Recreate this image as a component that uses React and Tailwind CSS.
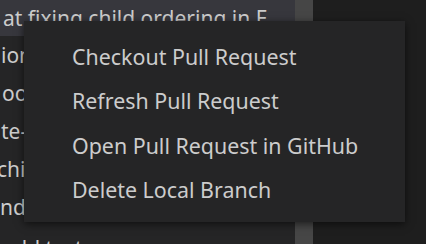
export default function App() {
  const rows = [
    { t: "at fixing child ordering in E", hl: true, pl: "pl-[3px]", h: "h-[36px]" },
    { t: "ion", pl: "pl-[1px]", h: "h-[38px]" },
    { t: "oo", pl: "pl-[2px]", h: "h-[38px]" },
    { t: "te-", pl: "pl-[1px]", h: "h-[38px]" },
    { t: "chi", pl: "ml-[-3px]", h: "h-[38px]" },
    { t: "nd", pl: "pl-0", h: "h-[38px]" },
    { t: "ald tests", pl: "pl-[10px]", h: "h-[38px] pt-[6px]" },
  ];
  const items = [
    "Checkout Pull Request",
    "Refresh Pull Request",
    "Open Pull Request in GitHub",
    "Delete Local Branch",
  ];
  return (
    <div
      className="relative w-[426px] h-[244px] overflow-hidden flex bg-[#1e1e1e] text-[#cccccc]"
      style={{ fontFamily: '"Noto Sans", "Open Sans", sans-serif' }}
    >
      <div className="relative w-[313px] h-full bg-[#252526] overflow-hidden flex flex-col">
        {rows.map((r, i) => (
          <div
            key={i}
            className={`${r.h} shrink-0 flex items-center w-[295px] overflow-hidden whitespace-nowrap text-[21px] ${
              r.hl ? "bg-[#37373d]" : ""
            }`}
          >
            <span className={`${r.pl} leading-none`}>{r.t}</span>
          </div>
        ))}
        <div className="absolute right-0 top-0 w-[18px] h-full bg-[rgba(121,121,121,0.4)]" />
      </div>
      <div className="absolute left-[24px] top-[21px] w-[381px] h-[201px] bg-[#252526] shadow-[0_2px_8px_rgba(0,0,0,0.6)] pt-[14px] flex flex-col">
        {items.map((it) => (
          <div key={it} className="h-[44.3px] shrink-0 flex items-center pl-[48px] text-[21.4px] whitespace-nowrap">
            {it}
          </div>
        ))}
      </div>
    </div>
  );
}
